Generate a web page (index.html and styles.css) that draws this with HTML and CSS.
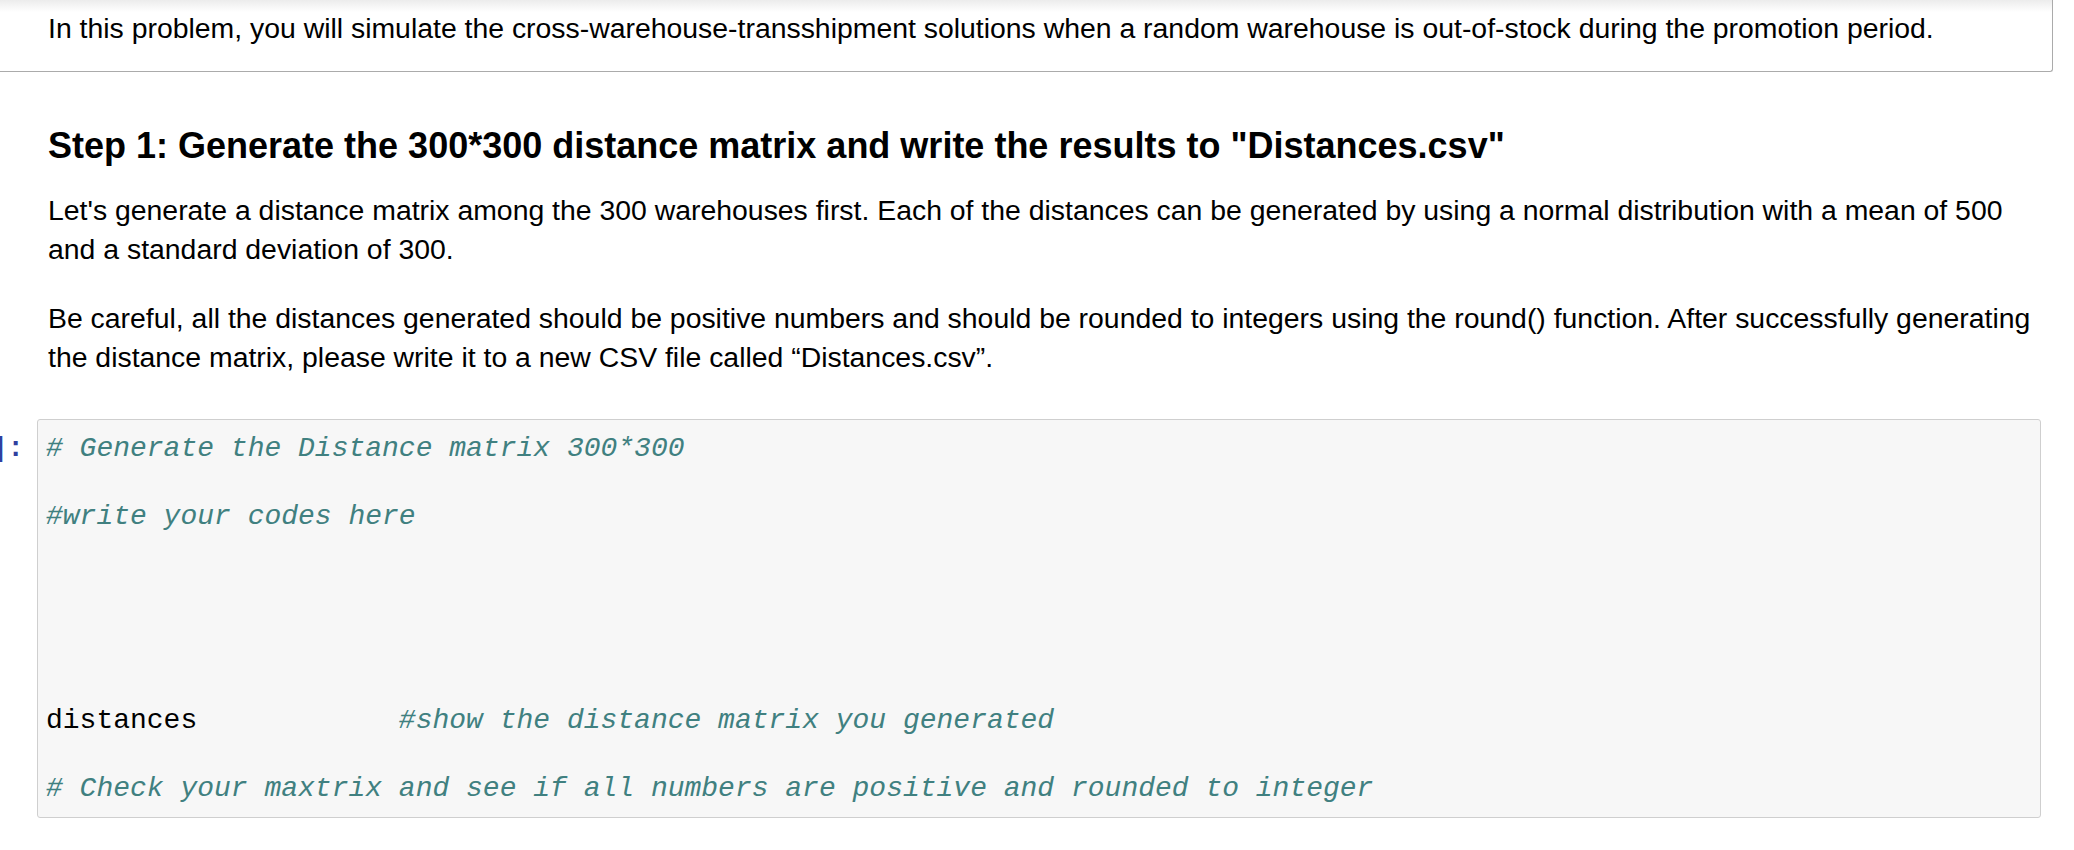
FILE: index.html
```html
<!DOCTYPE html>
<html>
<head>
<meta charset="utf-8">
<link rel="stylesheet" href="styles.css">
</head>
<body>
<div class="notebook">
  <div class="cell md-cell selected">
    <p class="text">In this problem, you will simulate the cross-warehouse-transshipment solutions when a random warehouse is out-of-stock during the promotion period.</p>
  </div>
  <div class="cell md-cell plain">
    <h2 class="heading">Step 1: Generate the 300*300 distance matrix and write the results to "Distances.csv"</h2>
    <p class="text para">Let's generate a distance matrix among the 300 warehouses first. Each of the distances can be generated by using a normal distribution with a mean of 500 and a standard deviation of 300.</p>
    <p class="text para gap">Be careful, all the distances generated should be positive numbers and should be rounded to integers using the round() function. After successfully generating the distance matrix, please write it to a new CSV file called “Distances.csv”.</p>
  </div>
  <div class="cell code-cell">
    <div class="prompt"><span>In&nbsp;[&nbsp;]:</span></div>
    <div class="input"><pre class="code"><span class="cm"># Generate the Distance matrix 300*300</span>

<span class="cm">#write your codes here</span>





distances            <span class="cm">#show the distance matrix you generated</span>

<span class="cm"># Check your maxtrix and see if all numbers are positive and rounded to integer</span></pre></div>
  </div>
</div>
</body>
</html>
```

FILE: styles.css
```css
html, body {
  margin: 0;
  padding: 0;
  background: #ffffff;
  overflow: hidden;
}

.notebook {
  width: 2074px;
  height: 850px;
  font-family: "Liberation Sans", Arial, Helvetica, sans-serif;
  color: #000000;
}

.cell {
  box-sizing: border-box;
}

.selected {
  width: 2053px;
  border-right: 1px solid #ababab;
  border-bottom: 1px solid #ababab;
  border-bottom-right-radius: 3px;
  padding: 9px 0 23px 48px;
  background: linear-gradient(#ececec, #ffffff 12px);
}

.text {
  margin: 0;
  font-size: 28.4px;
  line-height: 39px;
  white-space: nowrap;
}

.plain {
  margin-top: 53px;
  padding-left: 48px;
  width: 2034px;
}

.heading {
  margin: 0;
  font-size: 36px;
  line-height: 42px;
  font-weight: bold;
}

.para {
  white-space: normal;
  margin-top: 24px;
}

.para.gap {
  margin-top: 30px;
}

.code-cell {
  display: flex;
  margin-top: 42px;
}

.prompt {
  width: 37px;
  flex: none;
  display: flex;
  justify-content: flex-end;
  overflow: hidden;
  box-sizing: border-box;
  padding: 13px 13px 0 0;
  font-family: "Liberation Mono", "Courier New", monospace;
  font-size: 28px;
  line-height: 34px;
  color: #303f9f;
  font-weight: bold;
  white-space: nowrap;
}

.input {
  width: 2004px;
  flex: none;
  box-sizing: border-box;
  background: #f7f7f7;
  border: 1px solid #cfcfcf;
  border-radius: 3px;
  padding: 12px 8px 11px 8px;
}

.code {
  margin: 0;
  font-family: "Liberation Mono", "Courier New", monospace;
  font-size: 28px;
  line-height: 34px;
  color: #000000;
}

.cm {
  color: #408080;
  font-style: italic;
}
```
